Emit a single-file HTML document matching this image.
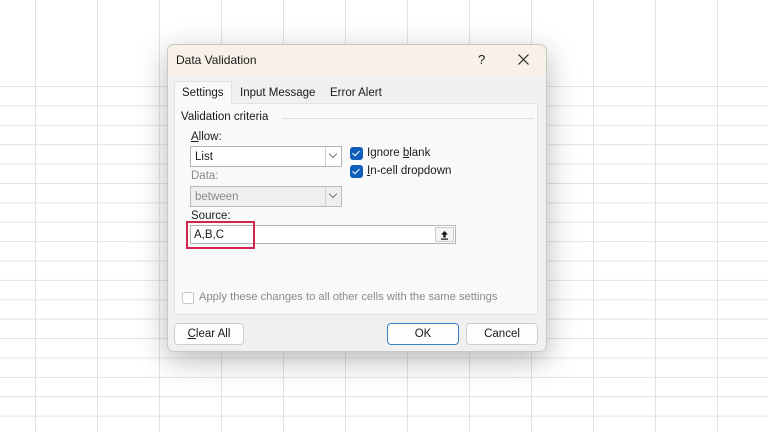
<!DOCTYPE html>
<html><head><meta charset="utf-8"><style>
*{box-sizing:border-box;margin:0;padding:0}
body{width:768px;height:432px;overflow:hidden;background:#fff;position:relative;font-family:"Liberation Sans",sans-serif;font-size:11px;color:#1a1a1a}
.grid{position:absolute;inset:0;
background-image:linear-gradient(to right,#e3e3e3 1px,transparent 1px);background-size:62px 100%;background-position:35px 0}
.hgrid{position:absolute;left:0;right:0;top:86px;bottom:0;background-image:linear-gradient(to bottom,#e3e3e3 1px,transparent 1px);background-size:100% 19.4px}
.dlg{position:absolute;left:167px;top:44px;width:380px;height:308px;background:#f0f0f0;border:1px solid #c8c8c8;border-radius:7px;box-shadow:0 8px 30px rgba(0,0,0,.28);overflow:hidden}
.title{height:30px;background:#f8f1e8;position:relative}
.title span{position:absolute;left:8px;top:8px;font-size:12px}
.abs{position:absolute}
.tab{position:absolute;top:39px;height:20px;font-size:11.5px;padding-top:3px}
.panel{position:absolute;left:6px;top:58px;width:364px;height:212px;background:#f9f9f9;border:1px solid #e2e2e2}
.box{position:absolute;background:#fff;border:1px solid #b5b5b5}
.dd{position:absolute;right:0;top:0;width:16px;height:100%;border-left:1px solid #d0d0d0}
.dd:after{content:"";position:absolute;left:4px;top:4px;width:5px;height:5px;border-right:1px solid #777;border-bottom:1px solid #777;transform:rotate(45deg)}
.cb{position:absolute;width:13px;height:13px;background:#0f5fb8;border-radius:3px}
.cb:after{content:"";position:absolute;left:4px;top:1.5px;width:3px;height:6px;border-right:1.5px solid #fff;border-bottom:1.5px solid #fff;transform:rotate(45deg)}
.btn{position:absolute;top:278px;height:22px;background:#fdfdfd;border:1px solid #cfcfcf;border-radius:4px;text-align:center;font-size:11.5px;padding-top:4px}
u{text-decoration:underline}
</style></head><body>
<div class="grid"></div><div class="hgrid"></div>
<div class="dlg">
<div class="title"><span>Data Validation</span><span style="left:310px;top:7px;font-size:13px">?</span>
<svg class="abs" style="left:350px;top:9px" width="11" height="11" viewBox="0 0 11 11"><path d="M0.5 0.5L10.5 10.5M10.5 0.5L0.5 10.5" stroke="#222" stroke-width="1.2"/></svg></div>
<div class="abs" style="left:6px;top:36px;width:58px;height:24px;background:#f9f9f9;border:1px solid #e2e2e2;border-bottom:none;z-index:2"></div>
<div class="tab" style="left:14px;z-index:3">Settings</div>
<div class="tab" style="left:72px">Input Message</div>
<div class="tab" style="left:162px">Error Alert</div>
<div class="panel"></div>
<div class="abs" style="left:13px;top:66px;font-size:11.5px">Validation criteria</div>
<div class="abs" style="left:114px;top:73px;width:252px;height:1px;background:#ddd"></div>
<div class="abs" style="left:23px;top:86px;font-size:11.5px"><u>A</u>llow:</div>
<div class="box" style="left:22px;top:101px;width:152px;height:21px"><span class="abs" style="left:4px;top:4px;font-size:11.5px">List</span><div class="dd"></div></div>
<div class="abs" style="left:23px;top:125px;font-size:11.5px;color:#8a8a8a">Data:</div>
<div class="box" style="left:22px;top:141px;width:152px;height:21px;background:#efefef;border-color:#bbb"><span class="abs" style="left:4px;top:4px;font-size:11.5px;color:#8a8a8a">between</span><div class="dd"></div></div>
<div class="cb" style="left:182px;top:102px"></div>
<div class="abs" style="left:199px;top:102px;font-size:11.5px">Ignore <u>b</u>lank</div>
<div class="cb" style="left:182px;top:120px"></div>
<div class="abs" style="left:199px;top:120px;font-size:11.5px"><u>I</u>n-cell dropdown</div>
<div class="abs" style="left:23px;top:165px;font-size:11.5px">Source:</div>
<div class="box" style="left:22px;top:180px;width:266px;height:19px"><span class="abs" style="left:3px;top:3px;font-size:11.5px">A,B,C</span>
<div class="abs" style="right:1px;top:1px;width:19px;height:15px;background:#f4f4f4;border:1px solid #ccc">
<svg class="abs" style="left:4px;top:2px" width="9" height="10" viewBox="0 0 9 10"><path d="M4.5 1L1 4.5H3.3V7.5H5.7V4.5H8Z" fill="#111"/><rect x="1" y="8.5" width="7" height="1.2" fill="#111"/></svg></div></div>
<div class="abs" style="left:18px;top:176px;width:69px;height:28px;border:2px solid #d3234f"></div>
<div class="abs" style="left:14px;top:247px;width:12px;height:12px;border:1px solid #c8c8c8;border-radius:2px;background:#fff"></div>
<div class="abs" style="left:31px;top:246px;font-size:11.2px;color:#8a8a8a">Apply these changes to all other cells with the same settings</div>
<div class="btn" style="left:6px;width:70px"><u>C</u>lear All</div>
<div class="btn" style="left:219px;width:72px;border:1px solid #3c7fc4">OK</div>
<div class="btn" style="left:298px;width:72px">Cancel</div>
</div>
</body></html>
